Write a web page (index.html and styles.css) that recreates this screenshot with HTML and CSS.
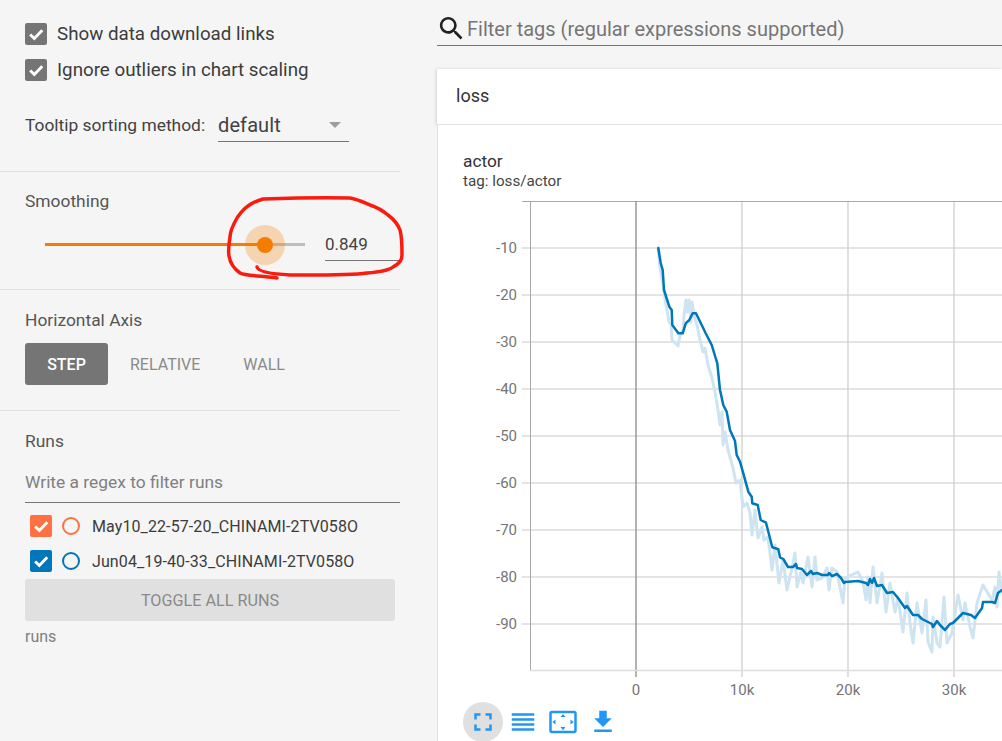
FILE: index.html
```html
<!DOCTYPE html>
<html lang="en">
<head>
<meta charset="utf-8">
<title>TensorBoard scalars</title>
<link rel="stylesheet" href="styles.css">
</head>
<body>
<div class="app">
  <aside class="sidebar">
    <section class="sec sec-options">
      <label class="check-row">
        <span class="box box-gray"><svg viewBox="0 0 24 24"><path d="M5 12.5l5 5L19.5 7.5"/></svg></span>
        <span class="check-text">Show data download links</span>
      </label>
      <label class="check-row">
        <span class="box box-gray"><svg viewBox="0 0 24 24"><path d="M5 12.5l5 5L19.5 7.5"/></svg></span>
        <span class="check-text">Ignore outliers in chart scaling</span>
      </label>
      <div class="tooltip-row">
        <span class="tooltip-label">Tooltip sorting method:</span>
        <span class="select"><span>default</span><i class="caret"></i></span>
      </div>
    </section>
    <section class="sec sec-smooth">
      <div class="sec-title">Smoothing</div>
      <div class="slider-row">
        <div class="slider">
          <div class="track-on"></div>
          <div class="track-off"></div>
          <span class="halo"></span>
          <span class="thumb"></span>
        </div>
        <div class="slider-value">0.849</div>
      </div>
    </section>
    <section class="sec sec-axis">
      <div class="sec-title">Horizontal Axis</div>
      <div class="axis-buttons">
        <span class="axis-btn active">STEP</span>
        <span class="axis-btn rel">RELATIVE</span>
        <span class="axis-btn wall">WALL</span>
      </div>
    </section>
    <section class="sec sec-runs">
      <div class="sec-title">Runs</div>
      <div class="regex">Write a regex to filter runs</div>
      <div class="run-row">
        <span class="box box-orange"><svg viewBox="0 0 24 24"><path d="M5 12.5l5 5L19.5 7.5"/></svg></span>
        <span class="radio radio-orange"></span>
        <span class="run-name">May10_22-57-20_CHINAMI-2TV058O</span>
      </div>
      <div class="run-row">
        <span class="box box-blue"><svg viewBox="0 0 24 24"><path d="M5 12.5l5 5L19.5 7.5"/></svg></span>
        <span class="radio radio-blue"></span>
        <span class="run-name">Jun04_19-40-33_CHINAMI-2TV058O</span>
      </div>
      <div class="toggle">TOGGLE ALL RUNS</div>
      <div class="runs-foot">runs</div>
    </section>
  </aside>

  <main class="main">
    <div class="search">
      <svg class="search-icon" viewBox="0 0 24 24"><path d="M15.5 14h-.79l-.28-.27C15.41 12.59 16 11.11 16 9.5 16 5.91 13.09 3 9.5 3S3 5.91 3 9.5 5.91 16 9.5 16c1.61 0 3.09-.59 4.23-1.57l.27.28v.79l5 4.99L20.49 19l-4.99-5zm-6 0C7.01 14 5 11.99 5 9.5S7.01 5 9.5 5 14 7.01 14 9.5 11.99 14 9.5 14z"/></svg>
      <span class="search-text">Filter tags (regular expressions supported)</span>
    </div>
    <div class="cat-header">loss</div>
    <div class="card">
      <div class="chart-title">actor</div>
      <div class="chart-tag">tag: loss/actor</div>
      <svg class="chart" viewBox="438 190 564 490" width="564" height="490">
        <g class="grid-h">
          <path d="M522 248H1002M522 295H1002M522 342H1002M522 389H1002M522 436H1002M522 483H1002M522 530H1002M522 577H1002M522 624H1002"/>
        </g>
        <g class="grid-v">
          <path d="M742 201V677M848 201V677M954 201V677"/>
        </g>
        <path class="axis" d="M522 201.500H1002M530.500 201V671"/>
        <path class="zero" d="M636 201V677"/>
        <path class="axis-b" d="M530 670.500H1002"/>
        <polyline class="light" points="658,248 660,268 663,285 666,305 669,322 671,324 672,340 676,344 678,346 680,336 683,330 684,315 686,300 687,312 689,300 691,322 692,302 694,315 697,325 700,340 703,352 705,348 708,365 712,378 715,392 718,410 720,425 722,412 723,445 725,432 728,450 733,468 736,483 740,480 743,507 747,503 750,513 752,535 755,510 758,538 762,527 764,540 768,537 772,570 775,545 779,583 783,560 787,590 792,568 795,553 797,587 801,572 803,583 808,557 812,587 815,557 817,580 822,578 827,568 829,590 832,568 837,572 843,603 845,578 858,572 863,582 866,600 868,577 870,603 873,567 877,603 882,573 886,612 890,583 895,612 898,597 903,632 907,593 910,623 913,643 917,603 922,633 926,600 928,642 932,652 933,617 937,643 940,647 944,597 947,643 952,633 958,595 963,620 965,603 970,627 973,638 977,603 983,585 992,600 995,587 997,607 999,572 1002,593"/>
        <polyline class="dark" points="658.300,248 660.700,263 662.700,270 664,290 669.300,306.700 671.700,310 672.300,325 676,330 678.300,333.300 682.700,333.300 685.700,323.300 689.300,320 692.700,313.300 696,313.300 701.700,325 705.700,333.300 711.700,345 717.300,363.300 720,390 723.300,405 726.700,411.700 730,430 735,441 736.700,455 740,461.700 743.300,473.300 748.300,491.700 751.700,496.700 752.300,503.300 757.700,505 760.700,520 766,522.700 772.300,547.300 778.300,549.300 780,557.300 783.300,559 788,567 793,567 796,564 797,568 802,569 807,575 811,571 813,574 817,573 822,575 828,575 829,573 832,576 837,574 841,578 844,583 845,582 858,581 862,582 866,583 868,585 870,579 872,583 874,578 877,586 882,585 887,593 893,592 898,598 905,608 907,606 913,615 918,615 922,619 932,624 933,627 937,621 940,625 945,630 950,624 953,623 963,613 971,615 975,618 982,608 983,602 992,602 995,603 998,593 1002,590"/>
        <g class="tick-y">
          <text x="517" y="253">-10</text><text x="517" y="300">-20</text><text x="517" y="347">-30</text>
          <text x="517" y="394">-40</text><text x="517" y="441">-50</text><text x="517" y="488">-60</text>
          <text x="517" y="535">-70</text><text x="517" y="582">-80</text><text x="517" y="629">-90</text>
        </g>
      </svg>
      <div class="tick-x-row">
        <span class="tick-x">0</span><span class="tick-x">10k</span><span class="tick-x">20k</span><span class="tick-x">30k</span>
      </div>
      <div class="tools">
        <span class="tool tool-on"><svg viewBox="0 0 24 24"><path d="M7 14H5v5h5v-2H7v-3zm-2-4h2V7h3V5H5v5zm12 7h-3v2h5v-5h-2v3zM14 5v2h3v3h2V5h-5z"/></svg></span>
        <span class="tool"><svg viewBox="0 0 24 24"><path d="M3 15h18v-2H3v2zm0 4h18v-2H3v2zm0-8h18V9H3v2zm0-6v2h18V5H3z"/></svg></span>
        <span class="tool"><svg viewBox="0 0 24 24"><path d="M12.010 5.500L10 8h4l-1.990-2.500zM18 10v4l2.500-1.990L18 10zM6 10l-2.500 2.010L6 14v-4zm8 6h-4l2.010 2.500L14 16zm7-13H3c-1.100 0-2 .9-2 2v14c0 1.100.9 2 2 2h18c1.100 0 2-.9 2-2V5c0-1.100-.9-2-2-2zm0 16.010H3V4.990h18v14.020z"/></svg></span>
        <span class="tool"><svg viewBox="0 0 24 24"><path d="M19 9h-4V3H9v6H5l7 7 7-7zM5 18v2h14v-2H5z"/></svg></span>
      </div>
    </div>
  </main>
</div>
<svg class="scribble" viewBox="0 0 1002 741" width="1002" height="741">
  <path d="M257 267C258 272 272 274 290 275L327 275C345 274 355 275 367 273 378 272 388 271 393 267 400 263 402 260 402 255 402 245 402 237 400 230 397 222 392 218 388 215 382 210 376 207 370 205 363 202 357 199 350 198 320 197 290 198 263 199 256 201 252 203 248 206 243 209 240 214 237 218 233 225 230 231 230 237 229 243 228 250 229 256 230 262 233 268 240 273 245 276 265 276 277 278"/>
</svg>
</body>
</html>
```
FILE: styles.css
```css
* { box-sizing: border-box; }
html, body { margin: 0; padding: 0; height: 741px; overflow: hidden; }
body {
  background: #f5f5f5;
  font-family: Roboto, "Liberation Sans", sans-serif;
  color: #3c3c3c;
  position: relative;
}
.app { display: flex; width: 1002px; height: 741px; }

/* sidebar */
.sidebar { width: 400px; flex: none; margin-right: 37px; }
.sec { border-bottom: 1px solid #e0e0e0; padding: 0 0 0 25px; }
.sec-options { height: 172px; padding-top: 23px; }
.sec-smooth { height: 118px; padding-top: 18px; }
.sec-axis { height: 121px; padding-top: 19px; }
.sec-runs { border-bottom: 0; padding-top: 19px; }
.sec-title { font-size: 17.400px; line-height: 22px; color: #555; }
.check-row { display: flex; align-items: center; height: 22px; margin-bottom: 14px; font-size: 18.750px; color: #3c3c3c; }
.box {
  width: 22px; height: 22px; border-radius: 2px; margin-right: 10px;
  display: inline-flex; align-items: center; justify-content: center; flex: none;
}
.box svg { width: 20px; height: 20px; fill: none; stroke: #fff; stroke-width: 3.4; }
.box-gray { background: #757575; }
.box-orange { background: #ff7043; }
.box-blue { background: #0077bb; }
.tooltip-row { display: flex; align-items: center; margin-top: 27px; height: 34px; }
.tooltip-label { font-size: 17.400px; width: 193px; color: #424242; }
.select {
  width: 131px; height: 34px; border-bottom: 1px solid #757575;
  font-size: 20px; letter-spacing: .1px; color: #424242;
  display: flex; justify-content: space-between; align-items: center; padding: 0 8px 0 0;
}
.caret { width: 0; height: 0; border-left: 6px solid transparent; border-right: 6px solid transparent; border-top: 6px solid #9e9e9e; }

.slider-row { display: flex; align-items: flex-start; margin-top: 9px; }
.slider { position: relative; width: 260px; height: 40px; margin: 4px 20px 0 20px; }
.track-on { position: absolute; left: 0; top: 18px; width: 220px; height: 3px; background: #f57c00; }
.track-off { position: absolute; left: 220px; top: 18px; width: 40px; height: 3px; background: #bdbdbd; }
.halo { position: absolute; left: 200px; top: 0; width: 40px; height: 40px; border-radius: 50%; background: rgba(245,124,0,.28); }
.thumb { position: absolute; left: 212px; top: 12px; width: 16px; height: 16px; border-radius: 50%; background: #f57c00; }
.slider-value {
  width: 74px; height: 33px; margin-top: 7px; border-bottom: 1px solid #757575;
  font-size: 17px; line-height: 32px; color: #424242;
}

.axis-buttons { display: flex; margin-top: 12px; height: 42px; align-items: center; }
.axis-btn { font-size: 16px; font-weight: 500; color: #8a8a8a; letter-spacing: 0; }
.axis-btn.active {
  width: 83px; height: 42px; background: #757575; color: #fff; border-radius: 3px;
  display: flex; align-items: center; justify-content: center;
}
.axis-btn.rel { margin-left: 22px; font-weight: 400; }
.axis-btn.wall { margin-left: 43px; font-weight: 400; }

.regex {
  margin-top: 15px; width: 375px; height: 36px; border-bottom: 1px solid #757575;
  font-size: 17.400px; line-height: 30px; color: #808080;
}
.run-row { display: flex; align-items: center; height: 22px; margin: 0 0 13px 5px; }
.regex + .run-row { margin-top: 12px; }
.radio { width: 18px; height: 18px; border-radius: 50%; border: 2px solid; margin-left: 0; flex: none; }
.radio-orange { border-color: #ff7043; }
.radio-blue { border-color: #0077bb; }
.run-name { margin-left: 12px; font-size: 16px; letter-spacing: .1px; color: #3c3c3c; white-space: nowrap; }
.toggle {
  width: 370px; height: 42px; margin-top: -6px; background: #e0e0e0; border-radius: 3px;
  display: flex; align-items: center; justify-content: center;
  font-size: 16.200px; color: #8a8a8a;
}
.runs-foot { margin-top: 7px; font-size: 16px; line-height: 18px; color: #808080; }

/* main */
.main { flex: 1; min-width: 0; }
.search { height: 46px; display: flex; align-items: center; padding-top: 12px; border-bottom: 1px solid #757575; }
.search-icon { width: 31px; height: 31px; flex: none; margin: 0 0 0 -1px; fill: #212121; }
.search-text { font-size: 20px; color: #757575; white-space: nowrap; }
.cat-header {
  margin-top: 23px; height: 56px; background: #fff; border-bottom: 1px solid #e0e0e0;
  box-shadow: -1px 0 3px rgba(0,0,0,.14); padding: 0 0 0 19px;
  font-size: 18px; line-height: 53px; color: #333;
  position: relative;
}
.card { background: #fff; border-left: 1px solid #e0e0e0; height: 617px; position: relative; }
.chart-title { padding: 24px 0 0 25px; font-size: 17.300px; line-height: 25px; color: #333; }
.chart-tag { padding-left: 25px; font-size: 15.200px; line-height: 14px; color: #444; }
.chart { display: block; margin-top: 2px; overflow: hidden; }
.grid-h path { stroke: #dcdcdc; stroke-width: 1.300; fill: none; }
.grid-v path { stroke: #cfcfcf; stroke-width: 1.300; fill: none; }
.axis { stroke: #a8a8a8; stroke-width: 1; fill: none; }
.zero { stroke: #999; stroke-width: 1.500; fill: none; }
.axis-b { stroke: #ddd; stroke-width: 1.500; fill: none; }
.light { fill: none; stroke: #cfe4f1; stroke-width: 3; stroke-linejoin: round; }
.dark { fill: none; stroke: #0077bb; stroke-width: 2.500; stroke-linejoin: round; stroke-linecap: round; }
.tick-y text { font-family: Roboto, sans-serif; font-size: 15px; fill: #757575; text-anchor: end; }
.tick-x-row { position: absolute; left: 0; top: 556px; width: 100%; height: 18px; }
.tick-x { position: absolute; width: 40px; text-align: center; font-size: 15px; line-height: 18px; color: #757575; }
.tick-x:nth-child(1) { left: 178px; }
.tick-x:nth-child(2) { left: 284px; }
.tick-x:nth-child(3) { left: 390px; }
.tick-x:nth-child(4) { left: 496px; }
.tools { display: flex; position: absolute; left: 25px; top: 577px; }
.tool { width: 40px; height: 40px; border-radius: 50%; display: flex; align-items: center; justify-content: center; }
.tool svg { width: 30px; height: 30px; fill: #2196f3; }
.tool-on { background: #e0e0e0; }

/* hand-drawn annotation over the page */
.scribble { position: absolute; left: 0; top: 0; pointer-events: none; }
.scribble path { fill: none; stroke: #fb1a0e; stroke-width: 3.500; stroke-linejoin: round; stroke-linecap: round; }
```
